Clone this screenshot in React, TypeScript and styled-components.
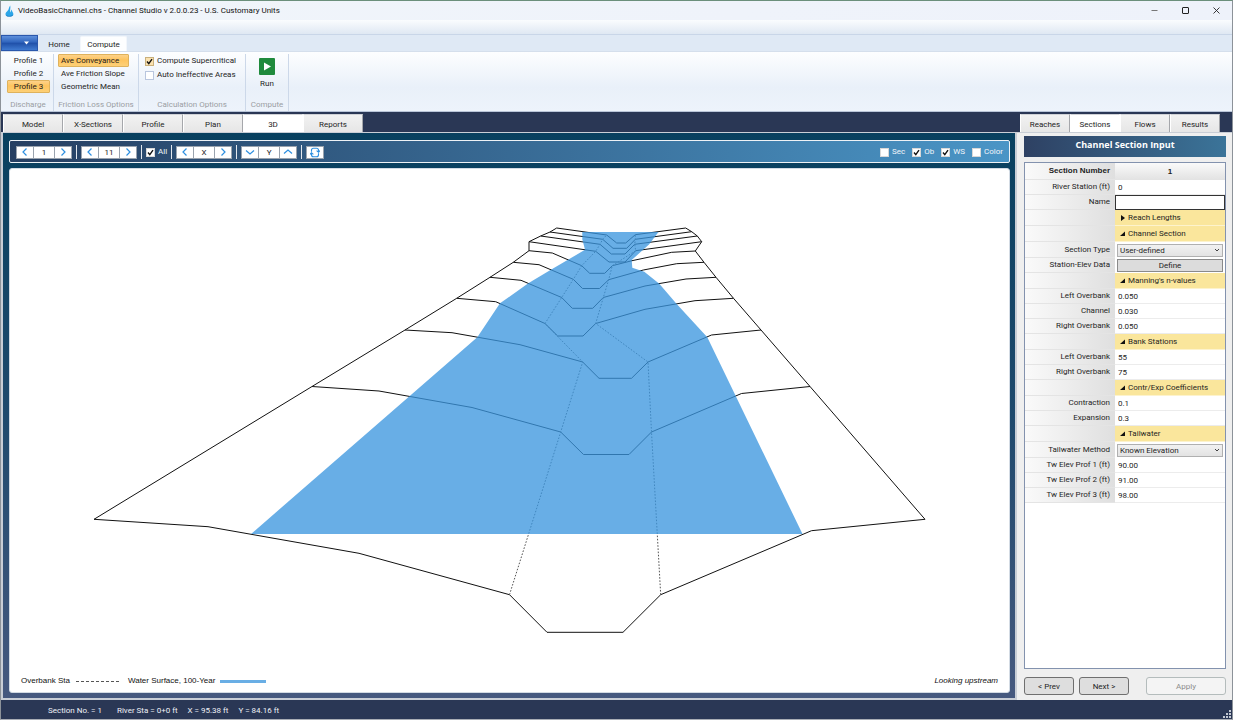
import React from "react";
import styled, { createGlobalStyle, css } from "styled-components";

const ui = 'Roboto, "Noto Sans", sans-serif';
const heading = '"Open Sans", "Noto Sans", sans-serif';
const plain = '"Liberation Sans", Arial, sans-serif';

const GlobalStyle = createGlobalStyle`
  * { box-sizing: border-box; }
  body { margin: 0; font: 8px/12px ${ui}; color: #1e1e1e; }
  button, input, select { font: inherit; color: inherit; margin: 0; padding: 0; border-radius: 0; }
  button { cursor: pointer; }
`;

const Window = styled.div`
  display: flex;
  flex-direction: column;
  min-height: 100vh;
  background: #eef3fa;
  border: 1px solid #8c9299;
  border-top-color: #6b8f7b;
  border-bottom-color: #a9adb5;
`;

/* ---------- title bar ---------- */

const TitleBar = styled.header`
  display: flex;
  align-items: center;
  height: 19px;
  padding-left: 4px;
  background: linear-gradient(90deg, #f0f5fa, #eff3fa 60%, #eef2fa);
`;

const Title = styled.h1`
  flex: 1;
  margin: 0 0 0 4px;
  font-size: 8px;
  font-weight: 400;
  color: #111;
`;

const CaptionButton = styled.button`
  display: grid;
  place-items: center;
  width: 31px;
  height: 19px;
  border: 0;
  background: none;
`;

/* ---------- ribbon ---------- */

const QuickAccess = styled.div`
  height: 15px;
  background: linear-gradient(#fafcfe, #dfe8f3);
  border-bottom: 1px solid #c9d6e8;
`;

const RibbonTabs = styled.nav`
  display: flex;
  align-items: flex-end;
  height: 16px;
  background: #dfe9f5;
`;

const AppMenu = styled.button`
  display: grid;
  place-items: center;
  width: 37px;
  height: 16px;
  padding-left: 14px;
  border: 1px solid #2a57ac;
  background: linear-gradient(#5d8fdb, #2f64bd 45%, #1f4fa8 50%, #3f7ad0);
`;

const RibbonTab = styled.button<{ $active?: boolean }>`
  height: 15px;
  width: ${(p) => (p.$active ? 47 : 42)}px;
  padding-top: 2px;
  border: 1px solid ${(p) => (p.$active ? "#f2f6fb" : "transparent")};
  border-bottom: 0;
  border-radius: 2px 2px 0 0;
  background: ${(p) => (p.$active ? "#fdfeff" : "none")};
`;

const Ribbon = styled.section`
  display: flex;
  height: 61px;
  padding: 2px 0 0 2px;
  background: linear-gradient(#fdfeff, #e9f0f9 60%, #edf3fb);
  border-top: 1px solid #d5dfec;
  border-bottom: 1px solid #b9c5d8;
`;

const Group = styled.div<{ $width: number }>`
  display: flex;
  flex-direction: column;
  width: ${(p) => p.$width}px;
  padding: 0 4px;
  border-right: 1px solid #ccd8e9;
`;

const GroupCaption = styled.div`
  margin-top: auto;
  text-align: center;
  white-space: nowrap;
  color: #9b9ea3;
`;

const RibbonOption = styled.button<{ $on?: boolean; $width: number }>`
  width: ${(p) => p.$width}px;
  height: 13px;
  padding: 0 2px;
  line-height: 11px;
  text-align: ${(p) => (p.$width > 50 ? "left" : "center")};
  white-space: nowrap;
  border: 1px solid transparent;
  border-radius: 1px;
  background: none;
  ${(p) =>
    p.$on &&
    css`
      border-color: #dfb25c;
      background: linear-gradient(#fdd28a, #fec45e 45%, #fdd077);
    `}
`;

const Check = styled.input.attrs({ type: "checkbox" })<{ $tone?: string }>`
  appearance: none;
  flex: none;
  width: 9px;
  height: 9px;
  border: 1px solid ${(p) => (p.$tone === "ribbon" ? "#b9c6de" : "#d8d8d8")};
  background: #fff;
  &:checked {
    ${(p) => p.$tone === "ribbon" && "background-color: #fbe2b0; border-color: #c9b07c;"}
  }
`;

const CheckLabel = styled.label<{ $ribbon?: boolean }>`
  display: grid;
  grid-template-columns: 9px auto;
  align-items: center;
  column-gap: 3px;
  height: ${(p) => (p.$ribbon ? 14 : 13)}px;
  padding-left: ${(p) => (p.$ribbon ? 2 : 0)}px;
  white-space: nowrap;
  color: ${(p) => (p.$ribbon ? "#1e1e1e" : "#f2f6fa")};
  > input, > svg { grid-area: 1 / 1; }
  > svg { pointer-events: none; visibility: hidden; z-index: 1; }
  > input:checked + svg { visibility: visible; }
`;

const RunButton = styled.button`
  display: flex;
  flex-direction: column;
  align-items: center;
  gap: 3px;
  padding: 4px 0 0;
  border: 0;
  background: none;
`;

/* ---------- work area ---------- */

const WorkArea = styled.main`
  flex: 1;
  display: grid;
  grid-template-columns: minmax(0, 1fr) 215px;
  grid-template-rows: 20px 1fr;
  background: #2a3755;
`;

const Tabs = styled.nav<{ $inset: number }>`
  display: flex;
  align-items: flex-end;
  padding-left: ${(p) => p.$inset}px;
`;

const Tab = styled.button<{ $active?: boolean; $width: number }>`
  width: ${(p) => p.$width}px;
  height: 18px;
  padding-top: 2px;
  border: 1px solid ${(p) => (p.$active ? "#fff" : "#a5a7ab")};
  border-top-color: #d0d2d6;
  border-left-color: #fff;
  border-bottom: 0;
  background: ${(p) => (p.$active ? "#fff" : "linear-gradient(#f2f2f2, #e6e6e6)")};
`;

const Viewer = styled.section`
  display: flex;
  flex-direction: column;
  gap: 5px;
  padding: 7px 5px 5px 6px;
  border: 2px solid #c9ced6;
  border-width: 1px 2px 2px 2px;
  background: linear-gradient(#08405f, #1f4a6d 50%, #46597f);
`;

const Toolbar = styled.div`
  display: flex;
  align-items: center;
  height: 23px;
  padding: 1px 6px 0;
  border: 1px solid #eef2f6;
  border-radius: 2px;
  background: linear-gradient(90deg, #263f62, #4a95c6);
`;

const ToolButton = styled.button`
  display: grid;
  place-items: center;
  width: 18px;
  height: 13px;
  border: 1px solid #9aa3ae;
  background: #fff;
`;

const ToolInput = styled.input`
  width: 22px;
  height: 13px;
  margin: 0 -1px;
  text-align: center;
  border: 1px solid #9aa3ae;
  background: #fff;
`;

const ToolGroup = styled.div`
  display: flex;
  align-items: center;
`;

const Divider = styled.span`
  width: 1px;
  height: 14px;
  margin: 0 4px;
  background: #e3e8ee;
`;

const ViewToggles = styled.div`
  display: flex;
  gap: 7px;
  margin-left: auto;
`;

const Canvas = styled.div`
  flex: 1;
  display: flex;
  flex-direction: column;
  border: 1px solid #d3dbe4;
  border-radius: 3px;
  background: #fff;
  > svg { flex: 1; width: 100%; min-height: 0; display: block; }
`;

const Legend = styled.footer`
  display: flex;
  align-items: center;
  height: 22px;
  padding: 0 11px;
  font-family: ${plain};
  color: #111;
`;

const DashKey = styled.span`
  width: 45px;
  height: 1px;
  margin: 0 7px 0 6px;
  background: repeating-linear-gradient(90deg, #555 0 3px, transparent 3px 5px);
`;

const WaterKey = styled.span`
  width: 46px;
  height: 3px;
  margin-left: 5px;
  background: #69aee5;
`;

const Direction = styled.em`
  margin-left: auto;
`;

/* ---------- section panel ---------- */

const Panel = styled.aside`
  display: flex;
  flex-direction: column;
  padding: 3px 6px 5px 7px;
  border-top: 1px solid #c9ced6;
  background: #efefef;
`;

const PanelTitle = styled.h2`
  margin: 0 0 5px;
  height: 21px;
  font-family: ${heading};
  font-size: 9px;
  line-height: 18px;
  font-weight: 700;
  text-align: center;
  color: #fff;
  background: linear-gradient(90deg, #2e4163, #3b7499);
`;

const Sheet = styled.div`
  flex: 1;
  border: 1px solid #8392ae;
  background: #fff;
`;

const SheetTable = styled.table`
  width: 100%;
  border-spacing: 0;
  table-layout: fixed;
`;

const Row = styled.tr<{ $h: number }>`
  height: ${(p) => p.$h}px;
`;

const RowHead = styled.th<{ $bold?: boolean }>`
  width: 90px;
  padding: 0 5px 0 0;
  line-height: 12px;
  text-align: right;
  font-weight: ${(p) => (p.$bold ? 700 : 400)};
  font-family: ${(p) => (p.$bold ? plain : ui)};
  background: linear-gradient(90deg, #fafafa, #dfdfdf);
  border-bottom: 1px solid #e4e4e4;
`;

const Cell = styled.td<{ $kind?: string }>`
  padding: 0 1px;
  line-height: 12px;
  ${(p) =>
    p.$kind === "head" &&
    css`
      font: 700 8px/12px ${plain};
      text-align: center;
      background: linear-gradient(#fafafa, #e2e2e2);
    `}
  ${(p) =>
    p.$kind === "value" &&
    css`
      border-bottom: 1px solid #ececec;
    `}
  ${(p) =>
    p.$kind === "name" &&
    css`
      padding: 0;
    `}
  ${(p) =>
    p.$kind === "category" &&
    css`
      background: #fae69c;
      border-bottom: 1px solid #fdf3cd;
    `}
  ${(p) =>
    (p.$kind === "select" || p.$kind === "button") &&
    css`
      padding: 0 2px;
    `}
`;

const ValueInput = styled.input`
  display: block;
  width: 100%;
  height: 14px;
  padding-left: 2px;
  border: 0;
  background: none;
`;

const NameInput = styled(ValueInput)`
  height: 15px;
  border: 1px solid #333;
  background: #fff;
`;

const Expander = styled.button`
  display: flex;
  align-items: center;
  gap: 3px;
  height: 14px;
  padding-left: 4px;
  border: 0;
  background: none;
`;

const SelectBox = styled.div`
  display: grid;
  align-items: center;
  > * { grid-area: 1 / 1; }
  > svg { justify-self: end; margin-right: 3px; pointer-events: none; }
`;

const Select = styled.select`
  appearance: none;
  width: 100%;
  height: 13px;
  padding: 0 2px;
  line-height: 11px;
  border: 1px solid #b0b0b0;
  background: linear-gradient(#f1f1f1, #e3e3e3);
`;

const DefineButton = styled.button`
  display: block;
  width: 100%;
  height: 13px;
  line-height: 11px;
  border: 1px solid #8a8a8a;
  background: #dcdcdc;
`;

const Actions = styled.div`
  display: flex;
  gap: 5px;
  margin-top: 8px;
`;

const ActionButton = styled.button<{ $wide?: boolean }>`
  width: ${(p) => (p.$wide ? 80 : 50)}px;
  height: 18px;
  padding-top: 1px;
  border: 1px solid #6f6f6f;
  border-radius: 3px;
  background: #dedede;
  &:disabled {
    margin-left: auto;
    color: #8d8d8d;
    border-color: #b4bcbc;
    background: #f4f4f4;
  }
`;

/* ---------- status bar ---------- */

const StatusBar = styled.footer`
  display: flex;
  align-items: center;
  height: 19px;
  padding: 2px 0 0 47px;
  color: #eef1f6;
  background: #2a3755;
  > svg { align-self: flex-end; margin-left: auto; }
`;

const StatusItem = styled.span<{ $gap: number }>`
  margin-right: ${(p) => p.$gap}px;
`;

/* ---------- drawings ---------- */

const Tick = () => (
  <svg width="9" height="9" viewBox="0 0 9 9" fill="none" stroke="#111" strokeWidth="1.4">
    <path d="M2 4.5 3.8 6.6 7 2.2" />
  </svg>
);

const chevrons: Record<string, string> = {
  left: "M6.5 1.5 3 5l3.5 3.5",
  right: "M3.5 1.5 7 5 3.5 8.5",
  down: "M1 3.5 5 7l4-3.5",
  up: "M1 6.5 5 3l4 3.5",
};

const Chevron = ({ to }: { to: string }) => (
  <svg width="10" height="10" viewBox="0 0 10 10" fill="none" stroke="#2d8fe0" strokeWidth="1.2">
    <path d={chevrons[to]} />
  </svg>
);

type Pt = [number, number];

// Cross sections, downstream to upstream: points, index of left bank, index of right bank.
const sections: { pts: Pt[]; lb: number; rb: number }[] = [
  { pts: [[94, 519.3], [208, 526.7], [359, 553.3], [509.5, 594.7], [547, 632.3], [623, 632.3], [660.7, 594.7], [811.5, 530.7], [925, 519.3]], lb: 3, rb: 6 },
  { pts: [[312, 386.5], [379, 391], [472, 407.5], [560.7, 432], [583.5, 454.5], [629, 454.5], [651.5, 432], [741.5, 393.5], [810, 386.5]], lb: 3, rb: 6 },
  { pts: [[405, 330], [452, 332.7], [520, 344.7], [582.7, 362], [599, 378.3], [631.5, 378.3], [648, 362], [711.5, 335], [761, 330]], lb: 3, rb: 6 },
  { pts: [[456.7, 298.3], [495.7, 301.7], [545, 323.5], [557.7, 336], [583, 336], [595.7, 323.5], [645, 309.3], [695, 300.7], [733.5, 298.3]], lb: 2, rb: 5 },
  { pts: [[490, 277.3], [521, 280.3], [561.7, 297.5], [572.3, 308.3], [592.7, 308.3], [603.3, 297.5], [645, 286], [686, 279], [716, 277.3]], lb: 2, rb: 5 },
  { pts: [[513.3, 262.3], [539, 264.7], [573.3, 279.3], [582.5, 288.5], [599.5, 288.5], [608.7, 279.7], [643.3, 270], [676.7, 263.7], [704, 262.3]], lb: 2, rb: 5 },
  { pts: [[529, 250.7], [552.3, 253], [581.7, 265.7], [589.7, 273.3], [604.7, 273.3], [612.3, 265.7], [632, 260.7], [671.7, 252.3], [695.3, 251]], lb: 2, rb: 5 },
  { pts: [[529, 241.7], [595.7, 251.3], [609, 262], [625, 262], [635.7, 250.7], [701.7, 241.7]], lb: 1, rb: 4 },
  { pts: [[540.7, 236], [600, 244.3], [611.3, 254], [625, 254], [634.7, 244.3], [697.3, 236]], lb: 1, rb: 4 },
  { pts: [[550, 232], [602.7, 239.3], [613, 248.3], [626.7, 248.3], [635.3, 239.3], [691.7, 231.7]], lb: 1, rb: 4 },
  { pts: [[556.7, 228], [606.7, 235], [616.7, 243], [625.7, 243], [635.3, 234.7], [685.7, 228]], lb: 1, rb: 4 },
];

const water: Pt[] = [
  [251, 534], [477.3, 337.3], [500, 303.3], [528.3, 283.3], [551.7, 269.3], [585, 249.8], [582.3, 239.3], [582.3, 232],
  [658.5, 232], [649, 244.5], [631.7, 260], [632.3, 267.7], [644.3, 271.7], [659.3, 283.7], [676.7, 304], [707.3, 337.3], [802.5, 534],
];

const line = (pts: Pt[]) => pts.map((p) => p.join(",")).join(" ");

const ChannelView = () => (
  <svg viewBox="10 169 999 501" role="img" aria-label="3D view of the channel">
    <g fill="none" stroke="#111" strokeWidth="1">
      {sections.map((s, i) => (
        <polyline key={i} points={line(s.pts)} />
      ))}
      <polyline points={line(sections.map((s) => s.pts[0]))} />
      <polyline points={line(sections.map((s) => s.pts[s.pts.length - 1]))} />
      <g stroke="#555" strokeDasharray="1.6 1.6">
        <polyline points={line(sections.map((s) => s.pts[s.lb]))} />
        <polyline points={line(sections.map((s) => s.pts[s.rb]))} />
      </g>
    </g>
    <polygon points={line(water)} fill="#3b96de" fillOpacity="0.77" />
  </svg>
);

/* ---------- content ---------- */

type Line = { label?: string; kind: string; value?: string; closed?: boolean };

const lines: Line[] = [
  { label: "River Station (ft)", kind: "value", value: "0" },
  { label: "Name", kind: "name" },
  { kind: "category", value: "Reach Lengths", closed: true },
  { kind: "category", value: "Channel Section" },
  { label: "Section Type", kind: "select", value: "User-defined" },
  { label: "Station-Elev Data", kind: "button", value: "Define" },
  { kind: "category", value: "Manning's n-values" },
  { label: "Left Overbank", kind: "value", value: "0.050" },
  { label: "Channel", kind: "value", value: "0.030" },
  { label: "Right Overbank", kind: "value", value: "0.050" },
  { kind: "category", value: "Bank Stations" },
  { label: "Left Overbank", kind: "value", value: "55" },
  { label: "Right Overbank", kind: "value", value: "75" },
  { kind: "category", value: "Contr/Exp Coefficients" },
  { label: "Contraction", kind: "value", value: "0.1" },
  { label: "Expansion", kind: "value", value: "0.3" },
  { kind: "category", value: "Tailwater" },
  { label: "Tailwater Method", kind: "select", value: "Known Elevation" },
  { label: "Tw Elev Prof 1 (ft)", kind: "value", value: "90.00" },
  { label: "Tw Elev Prof 2 (ft)", kind: "value", value: "91.00" },
  { label: "Tw Elev Prof 3 (ft)", kind: "value", value: "98.00" },
];

const SheetRow = ({ item, id }: { item: Line; id: string }) => {
  const tall = item.kind === "category" || item.kind === "select";
  return (
    <Row $h={tall ? 16 : 15}>
      <RowHead scope="row">{item.label && <label htmlFor={id}>{item.label}</label>}</RowHead>
      <Cell $kind={item.kind}>
        {item.kind === "value" && <ValueInput id={id} defaultValue={item.value} />}
        {item.kind === "name" && <NameInput id={id} />}
        {item.kind === "button" && <DefineButton id={id}>{item.value}</DefineButton>}
        {item.kind === "select" && (
          <SelectBox>
            <Select id={id}>
              <option>{item.value}</option>
            </Select>
            <svg width="6" height="6" viewBox="0 0 6 6" fill="none" stroke="#444">
              <path d="M1 2l2 2 2-2" />
            </svg>
          </SelectBox>
        )}
        {item.kind === "category" && (
          <Expander aria-expanded={!item.closed}>
            <svg width="5" height="6" viewBox="0 0 5 6">
              <path d={item.closed ? "M1 0 5 3 1 6z" : "M5 0.5v4.5H0z"} fill="#111" />
            </svg>
            {item.value}
          </Expander>
        )}
      </Cell>
    </Row>
  );
};

const Toggle = ({ label, on, ribbon }: { label: string; on?: boolean; ribbon?: boolean }) => (
  <CheckLabel $ribbon={ribbon}>
    <Check $tone={ribbon ? "ribbon" : "tool"} defaultChecked={on} />
    <Tick />
    {label}
  </CheckLabel>
);

const Stepper = ({ value, label, from, to }: { value: string; label: string; from: string; to: string }) => (
  <ToolGroup>
    <ToolButton aria-label={`${label} ${from}`}><Chevron to={from} /></ToolButton>
    <ToolInput aria-label={label} defaultValue={value} />
    <ToolButton aria-label={`${label} ${to}`}><Chevron to={to} /></ToolButton>
  </ToolGroup>
);

export default function App() {
  return (
    <Window>
      <GlobalStyle />
      <TitleBar>
        <svg width="9" height="12" viewBox="0 0 9 12">
          <path d="M5.2 0.5C3.5 2.5 4.2 4 2.8 5.6 1.8 6.8 0.3 8 0.5 9.6 0.7 11.3 2.6 11.6 4.4 11.5 6.8 11.5 8.6 10.8 8.4 8.9 8.2 7.4 6.6 6.6 6.8 4.6 5.8 5.4 6 6.8 5.3 7.4 4.6 5.6 5.9 2.9 5.2 0.5Z" fill="#2aa5e8" />
          <path d="M1 10.2c2 1.2 5 1.1 7-.4-.5 1.5-2 1.8-3.6 1.8S1.5 11.4 1 10.2Z" fill="#1470b8" />
        </svg>
        <Title>VideoBasicChannel.chs - Channel Studio v 2.0.0.23 - U.S. Customary Units</Title>
        <CaptionButton aria-label="Minimize">
          <svg width="7" height="7" viewBox="0 0 7 7" stroke="#777"><path d="M0.5 3.5h6" /></svg>
        </CaptionButton>
        <CaptionButton aria-label="Maximize">
          <svg width="7" height="7" viewBox="0 0 7 7" fill="none" stroke="#222"><rect x="0.5" y="0.5" width="6" height="6" rx="0.5" /></svg>
        </CaptionButton>
        <CaptionButton aria-label="Close">
          <svg width="7" height="7" viewBox="0 0 7 7" stroke="#222" strokeWidth="0.9"><path d="M0.5 0.5l6 6M6.5 0.5l-6 6" /></svg>
        </CaptionButton>
      </TitleBar>
      <QuickAccess />
      <RibbonTabs>
        <AppMenu aria-label="Application menu">
          <svg width="5" height="4" viewBox="0 0 5 4"><path d="M0 0.5h5L2.5 3.5z" fill="#fff" /></svg>
        </AppMenu>
        <RibbonTab>Home</RibbonTab>
        <RibbonTab $active>Compute</RibbonTab>
      </RibbonTabs>
      <Ribbon>
        <Group $width={51}>
          <RibbonOption $width={43}>Profile 1</RibbonOption>
          <RibbonOption $width={43}>Profile 2</RibbonOption>
          <RibbonOption $width={43} $on>Profile 3</RibbonOption>
          <GroupCaption>Discharge</GroupCaption>
        </Group>
        <Group $width={85}>
          <RibbonOption $width={71} $on>Ave Conveyance</RibbonOption>
          <RibbonOption $width={71}>Ave Friction Slope</RibbonOption>
          <RibbonOption $width={71}>Geometric Mean</RibbonOption>
          <GroupCaption>Friction Loss Options</GroupCaption>
        </Group>
        <Group $width={107}>
          <Toggle ribbon on label="Compute Supercritical" />
          <Toggle ribbon label="Auto Ineffective Areas" />
          <GroupCaption>Calculation Options</GroupCaption>
        </Group>
        <Group $width={43}>
          <RunButton>
            <svg width="16" height="17" viewBox="0 0 16 17">
              <rect width="16" height="17" rx="1" fill="#1f8a3c" />
              <path d="M5 4.5 12 8.5 5 12.5z" fill="#fff" />
            </svg>
            Run
          </RunButton>
          <GroupCaption>Compute</GroupCaption>
        </Group>
      </Ribbon>

      <WorkArea>
        <Tabs $inset={2}>
          {["Model", "X-Sections", "Profile", "Plan", "3D", "Reports"].map((t) => (
            <Tab key={t} $width={60} $active={t === "3D"}>{t}</Tab>
          ))}
        </Tabs>
        <Tabs $inset={3}>
          {["Reaches", "Sections", "Flows", "Results"].map((t) => (
            <Tab key={t} $width={50} $active={t === "Sections"}>{t}</Tab>
          ))}
        </Tabs>

        <Viewer>
          <Toolbar>
            <Stepper label="Section" value="1" from="left" to="right" />
            <Divider />
            <Stepper label="Last section" value="11" from="left" to="right" />
            <Divider />
            <Toggle on label="All" />
            <Divider />
            <Stepper label="Rotate X" value="X" from="left" to="right" />
            <Divider />
            <Stepper label="Rotate Y" value="Y" from="down" to="up" />
            <Divider />
            <ToolButton aria-label="Reset view">
              <svg width="10" height="11" viewBox="0 0 10 11" fill="none" stroke="#2d8fe0" strokeWidth="1.1">
                <path d="M1.5 4.8V3.2Q1.5 1.2 3.5 1.2h3Q8.5 1.2 8.5 3.2V5M6.6 3.6 8.5 5.2 10 3.6M8.5 6.2v1.6q0 2-2 2h-3q-2 0-2-2V6M0 7.4 1.5 5.8 3.4 7.4" />
              </svg>
            </ToolButton>
            <ViewToggles>
              <Toggle label="Sec" />
              <Toggle on label="Ob" />
              <Toggle on label="WS" />
              <Toggle label="Color" />
            </ViewToggles>
          </Toolbar>
          <Canvas>
            <ChannelView />
            <Legend>
              Overbank Sta
              <DashKey />
              Water Surface, 100-Year
              <WaterKey />
              <Direction>Looking upstream</Direction>
            </Legend>
          </Canvas>
        </Viewer>

        <Panel>
          <PanelTitle>Channel Section Input</PanelTitle>
          <Sheet>
            <SheetTable>
              <tbody>
                <Row $h={17}>
                  <RowHead scope="row" $bold>Section Number</RowHead>
                  <Cell $kind="head">1</Cell>
                </Row>
                {lines.map((item, i) => (
                  <SheetRow key={i} item={item} id={`field-${i}`} />
                ))}
              </tbody>
            </SheetTable>
          </Sheet>
          <Actions>
            <ActionButton>&lt; Prev</ActionButton>
            <ActionButton>Next &gt;</ActionButton>
            <ActionButton $wide disabled>Apply</ActionButton>
          </Actions>
        </Panel>
      </WorkArea>

      <StatusBar>
        <StatusItem $gap={15}>Section No. = 1</StatusItem>
        <StatusItem $gap={10}>River Sta = 0+0 ft</StatusItem>
        <StatusItem $gap={10}>X = 95.38 ft</StatusItem>
        <StatusItem $gap={10}>Y = 84.16 ft</StatusItem>
        <svg width="10" height="10" viewBox="0 0 10 10" fill="#c3c9d4">
          <path d="M7 1h2v2H7zM4 4h2v2H4zM7 4h2v2H7zM1 7h2v2H1zM4 7h2v2H4zM7 7h2v2H7z" />
        </svg>
      </StatusBar>
    </Window>
  );
}
